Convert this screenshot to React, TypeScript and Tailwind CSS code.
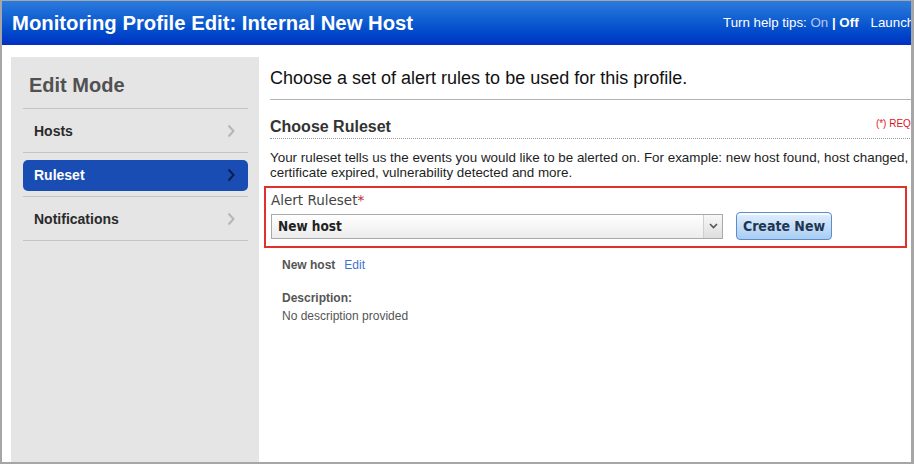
const Chevron = ({ color }: { color: string }) => (
  <svg width="8" height="14" viewBox="0 0 8 14" fill="none">
    <polyline points="1.5,1.5 6.5,7 1.5,12.5" stroke={color} strokeWidth="2" />
  </svg>
);

const navItems = [
  { label: "Hosts", active: false },
  { label: "Ruleset", active: true },
  { label: "Notifications", active: false },
];

export default function App() {
  return (
    <div
      className="w-[914px] h-[464px] overflow-hidden bg-white border-t border-l-2 border-r-[3px] border-b-2 border-[#a6a6a6] flex flex-col"
      style={{ fontFamily: '"Liberation Sans", Arial, sans-serif' }}
    >
      {/* Top bar */}
      <div className="h-[44px] shrink-0 bg-gradient-to-b from-[#2b7bdc] to-[#0030c2] flex items-center pl-[10px] overflow-hidden">
        <h1 className="flex-1 text-white font-bold text-[20.3px] leading-none whitespace-nowrap">
          Monitoring Profile Edit: Internal New Host
        </h1>
        <div className="w-[188px] shrink-0 overflow-hidden text-white text-[13.3px] whitespace-nowrap">
          Turn help tips: <span className="text-[#b9c9ea]">On</span> <span className="font-bold">|</span>{" "}
          <span className="font-bold">Off</span>
          <span className="ml-[12px]">Launch</span>
        </div>
      </div>

      <div className="flex flex-1 min-h-0 pt-[12px] pl-[9px]">
        {/* Sidebar */}
        <aside className="w-[248px] shrink-0 bg-[#e5e5e5] pl-[12px] pr-[11px]">
          <div className="h-[52px] flex items-center pl-[6px] pt-[5px] text-[20px] font-bold text-[#515151] border-b border-[#c4c4c4]">
            Edit Mode
          </div>
          {navItems.map((item) => (
            <div key={item.label} className="h-[44px] border-b border-[#c4c4c4] flex items-center pt-[1px]">
              {item.active ? (
                <div className="w-full h-[31px] rounded-[5px] bg-[#1a4db3] flex items-center justify-between pl-[11px] pr-[13px]">
                  <span className="text-white font-bold text-[14px]">{item.label}</span>
                  <Chevron color="#0b1f4d" />
                </div>
              ) : (
                <div className="w-full flex items-center justify-between pl-[11px] pr-[13px]">
                  <span className="text-[#2a2a2a] font-bold text-[14px]">{item.label}</span>
                  <Chevron color="#b5b5b5" />
                </div>
              )}
            </div>
          ))}
        </aside>

        {/* Main content */}
        <main className="flex-1 min-w-0 overflow-hidden pl-[11px]">
          <div className="w-[720px]">
            <div className="h-[43px] flex items-center text-[18px] text-[#111] border-b border-[#b3b3b3]">
              Choose a set of alert rules to be used for this profile.
            </div>

            <div className="w-[672px] mt-[15px] h-[24px] flex items-end justify-between border-b border-dotted border-[#9a9a9a] pb-[3px]">
              <h2 className="text-[16px] font-bold text-[#333] leading-none">Choose Ruleset</h2>
              <span className="text-[10px] text-[#e0141e] mb-[4px] whitespace-nowrap">(*) REQUIRED</span>
            </div>

            <p className="w-[645px] mt-[11px] text-[13.4px] leading-[15px] text-[#1e1e1e]">
              Your ruleset tells us the events you would like to be alerted on. For example: new host found, host changed,
              certificate expired, vulnerability detected and more.
            </p>

            <div className="ml-[-6px] mt-[6px] w-[643px] h-[62px] border-2 border-[#e2302d] pl-[5px] pt-[5px]">
              <div
                className="text-[13.5px] leading-[15px] text-[#444]"
                style={{ fontFamily: '"DejaVu Sans", Tahoma, sans-serif' }}
              >
                Alert Ruleset<span className="text-[#c0282d]">*</span>
              </div>
              <div
                className="flex items-center mt-[4px] gap-[13px]"
                style={{ fontFamily: '"DejaVu Sans Condensed", "DejaVu Sans", Tahoma, sans-serif' }}
              >
                <div className="w-[452px] h-[25px] border border-[#a9a9a9] bg-gradient-to-b from-white to-[#ececec] flex">
                  <div className="flex-1 flex items-center pl-[6px] text-[13.5px] font-bold text-[#222]">New host</div>
                  <div className="w-[19px] border-l border-[#cfcfcf] bg-gradient-to-b from-[#f7f7f7] to-[#dedede] flex items-center justify-center">
                    <svg width="9" height="6" viewBox="0 0 9 6">
                      <polyline points="1,1 4.5,4.5 8,1" fill="none" stroke="#555" strokeWidth="1.6" />
                    </svg>
                  </div>
                </div>
                <button className="w-[96px] h-[28px] rounded-[4px] border border-[#5b8ccc] bg-gradient-to-b from-[#e2effd] to-[#a9cdf3] shadow-[inset_0_2px_0_#f7fbff] text-[14px] font-bold text-[#1f3552]">
                  Create New
                </button>
              </div>
            </div>

            <div className="pl-[12px] pt-[10px] text-[12px] text-[#555]">
              <div className="leading-[14px]">
                <span className="font-bold">New host</span>
                <span className="ml-[9px] text-[#3f72d2]">Edit</span>
              </div>
              <div className="mt-[19px] font-bold leading-[14px]">Description:</div>
              <div className="mt-[4px] leading-[14px]">No description provided</div>
            </div>
          </div>
        </main>
      </div>
    </div>
  );
}
